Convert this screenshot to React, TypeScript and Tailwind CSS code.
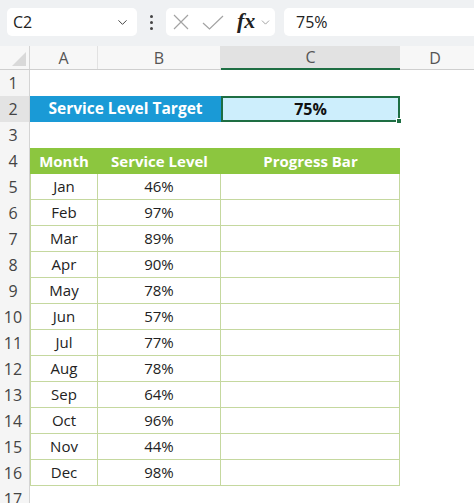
import { ChevronDown } from "lucide-react";

const months = [
  ["Jan", "46%"],
  ["Feb", "97%"],
  ["Mar", "89%"],
  ["Apr", "90%"],
  ["May", "78%"],
  ["Jun", "57%"],
  ["Jul", "77%"],
  ["Aug", "78%"],
  ["Sep", "64%"],
  ["Oct", "96%"],
  ["Nov", "44%"],
  ["Dec", "98%"],
];

function RowHead({ n, active }: { n: number; active?: boolean }) {
  return (
    <div
      className={`w-[30px] shrink-0 flex items-center justify-center pr-[3px] text-[16px] text-[#444] border-r border-[#d4d4d4] ${
        active ? "bg-[#e3e3e3]" : "bg-[#f5f5f5]"
      }`}
    >
      {n}
    </div>
  );
}

function Toolbar() {
  return (
    <div className="h-[46px] bg-[#eff1f3] flex items-start pt-[8px] pl-[7px]">
      <div className="w-[130px] h-[28px] bg-white rounded-[5px] flex items-center justify-between pl-[6px] pr-[7px] text-[16px] text-[#222]">
        <span>C2</span>
        <ChevronDown size={15} strokeWidth={1.6} className="text-[#444]" />
      </div>
      <div className="w-[29px] h-[28px] flex flex-col items-center justify-center gap-[3px]">
        <span className="w-[3px] h-[3px] rounded-full bg-[#444]" />
        <span className="w-[3px] h-[3px] rounded-full bg-[#444]" />
        <span className="w-[3px] h-[3px] rounded-full bg-[#444]" />
      </div>
      <div className="w-[109px] h-[28px] bg-white rounded-[5px] flex items-center pl-[7px]">
        {/* cancel */}
        <svg width="16" height="16" viewBox="0 0 16 16" fill="none" stroke="#a3a3a3" strokeWidth="1.2">
          <path d="M1 1 L15 15 M15 1 L1 15" />
        </svg>
        {/* enter */}
        <svg width="22" height="15" viewBox="0 0 22 15" fill="none" stroke="#a3a3a3" strokeWidth="1.2" className="ml-[13px]">
          <path d="M1 8 L7.5 14 L21 1" />
        </svg>
        <span className="ml-[13px] text-[22px] leading-none italic font-bold text-[#222] font-['Liberation_Serif',serif] -mt-[2px]">
          fx
        </span>
        <ChevronDown size={13} strokeWidth={1.4} className="ml-[4px] text-[#888]" />
      </div>
      <div className="ml-[9px] flex-1 h-[28px] bg-white rounded-l-[5px] flex items-center pl-[12px] text-[16px] text-[#222]">
        75%
      </div>
    </div>
  );
}

function ColumnHeader() {
  return (
    <div className="flex h-[24px] border-b border-[#cfcfcf] bg-[#f7f7f7] text-[16px] text-[#555]">
      <div className="w-[30px] shrink-0 border-r border-[#d4d4d4] relative">
        <div className="absolute right-[3px] bottom-[3px] w-0 h-0 border-l-[14px] border-l-transparent border-b-[14px] border-b-[#d9d9d9]" />
      </div>
      <div className="w-[68px] shrink-0 flex items-center justify-center border-r border-[#e2e2e2]">A</div>
      <div className="w-[123px] shrink-0 flex items-center justify-center border-r border-[#e2e2e2]">B</div>
      <div className="w-[179px] shrink-0 flex items-center justify-center bg-[#e2e2e2] border-b-2 border-[#1e6e43] -mb-px">
        C
      </div>
      <div className="flex-1 flex items-center justify-center pr-[4px]">D</div>
    </div>
  );
}

export default function App() {
  return (
    <div className="w-[474px] h-[503px] overflow-hidden bg-white font-['Open_Sans',sans-serif]">
      <Toolbar />
      <ColumnHeader />

      {/* row 1 */}
      <div className="flex h-[26px]">
        <RowHead n={1} />
      </div>

      {/* row 2: target */}
      <div className="flex h-[26px]">
        <RowHead n={2} active />
        <div className="w-[191px] shrink-0 bg-[#1a9ad6] flex items-center justify-center text-white font-bold text-[15.5px]">
          Service Level Target
        </div>
        <div className="w-[179px] shrink-0 bg-[#cdeefc] border-2 border-[#1e6e43] relative flex items-center justify-center font-bold text-[16px] text-[#111]">
          75%
          <div className="absolute -right-[4px] -bottom-[4px] w-[6px] h-[6px] bg-[#1e6e43] border border-white" />
        </div>
      </div>

      {/* row 3 */}
      <div className="flex h-[26px]">
        <RowHead n={3} />
      </div>

      {/* row 4: table header */}
      <div className="flex h-[26px]">
        <RowHead n={4} />
        <div className="flex w-[370px] bg-[#8cc63f] text-white font-bold text-[15px]">
          <div className="w-[68px] flex items-center justify-center">Month</div>
          <div className="w-[123px] flex items-center justify-center">Service Level</div>
          <div className="w-[179px] flex items-center justify-center">Progress Bar</div>
        </div>
      </div>

      {/* rows 5-16 */}
      {months.map(([m, v], i) => (
        <div key={m} className="flex h-[26px]">
          <RowHead n={i + 5} />
          <div className="flex w-[370px] text-[15px] text-[#222] border-b border-[#c5d89f]">
            <div className="w-[68px] flex items-center justify-center border-l border-r border-[#c5d89f]">{m}</div>
            <div className="w-[123px] flex items-center justify-center border-r border-[#c5d89f]">{v}</div>
            <div className="w-[179px] border-r border-[#c5d89f]" />
          </div>
        </div>
      ))}

      {/* row 17 */}
      <div className="flex h-[26px]">
        <RowHead n={17} />
      </div>
    </div>
  );
}
